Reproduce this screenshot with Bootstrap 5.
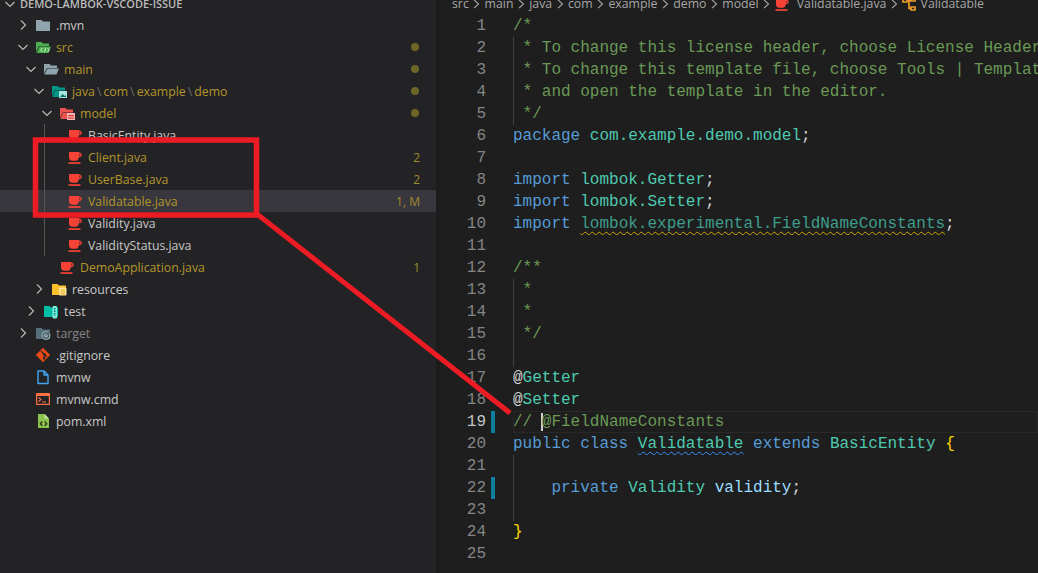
<!DOCTYPE html>
<html lang="en">
<head>
<meta charset="utf-8">
<title>Validatable.java</title>
<link href="https://cdn.jsdelivr.net/npm/bootstrap@5.3.0/dist/css/bootstrap.min.css" rel="stylesheet">
<style>
html,body{height:100%;overflow:hidden;background:#1e1e1e}
.workbench{height:573px;position:relative;overflow:hidden}
.side{width:436px;background:#232325;font:12.3px/22px "Open Sans",sans-serif;color:#c8c8c8;margin-top:-8px;flex:none;position:relative}
.gutterstrip{width:4px;background:#1c1c1c;flex:none}
.tree-head{height:22px;padding-top:2px;font-weight:600;font-size:11px;color:#bbb;padding-left:2px;position:relative}
.tree-head .chev{width:18px}
.trow{height:22px;display:flex;align-items:center;padding-right:16px;position:relative}
.trow>span:not(.chev):not(.dot){padding-top:2px}
.trow.sel{background:#37373d}
.d0{padding-left:15px}.d1{padding-left:23px}.d2{padding-left:31px}.d3{padding-left:39px}.d4{padding-left:47px}
.chev{width:20px;height:16px;flex:none;display:flex;align-items:center}
.chev svg{width:16px;height:16px}
.ficon{width:16px;height:16px;margin-right:5px;flex:none}
.mod{color:#b3952c}
.dim{color:#858585}
.sep{color:#6b6b6b;margin:0 2px}
.stat{margin-left:auto;color:#a08a2c;font-size:12px}
.dot{margin-left:auto;margin-right:1px;width:8px;height:8px;border-radius:50%;background:#6d6526}
.tguide{position:absolute;left:44px;top:132px;width:1px;height:132px;background:#555}
.editor{min-width:0;background:#1e1e1e;margin-top:-7px;position:relative}
.crumbs{height:22px;font:12.3px/22px "Open Sans",sans-serif;color:#a6a6a6;padding-left:12px;gap:4.400px;white-space:nowrap}
.crumbs svg{flex:none}
.crumbs .file{margin-right:2px}
.cline{height:22px;display:flex;font:16px/22px "Liberation Mono",monospace;white-space:pre;color:#d4d4d4;position:relative}
.num{width:46px;text-align:right;color:#858585;flex:none;font-family:"Liberation Mono",monospace}
.bar{width:4px;margin-left:5px;margin-right:18px;flex:none}
.bar.on{background:#0c7d9d}
.txt{position:relative;flex:1;min-width:0;overflow:hidden}
.guide::before{content:"";position:absolute;left:0;top:0;bottom:0;width:1px;background:#404040}
.active .num{color:#c6c6c6}
.active .txt{box-shadow:inset 0 0 0 1px #282828}
.caret-mark{border-left:2px solid #d0d0d0;margin-left:-1px;margin-right:-1px}
.c{color:#6a9955}.k{color:#569cd6}.t{color:#4ec9b0}.v{color:#9cdcfe}.b{color:#ffd700}
.faded{color:#3f9d8b}
.warn{text-decoration:underline wavy #cca700 1px;text-underline-offset:3px}
.info{text-decoration:underline wavy #3794ff 1px;text-underline-offset:3px}
.note{position:absolute;left:0;top:0;pointer-events:none}
</style>
</head>
<body>
<svg width="0" height="0" class="d-block">
<defs>
<symbol id="cd" viewBox="0 0 16 16"><path d="M3.500 6l4.500 4.500L12.500 6" fill="none" stroke="#b8b8b8" stroke-width="1.200"/></symbol>
<symbol id="cr" viewBox="0 0 16 16"><path d="M6 3.500L10.500 8 6 12.500" fill="none" stroke="#b8b8b8" stroke-width="1.200"/></symbol>
<symbol id="crs" viewBox="0 0 7 10"><path d="M1 .8L5.500 5 1 9.200" fill="none" stroke="#a6a6a6" stroke-width="1.100"/></symbol>
<symbol id="java" viewBox="0 0 16 16"><path d="M2 3h10.200v.8h.5a2 2 0 0 1 0 4.200h-.7C11.700 10.300 10.500 11.700 8.800 11.700H5.200C3.300 11.700 2 10.300 2 8.300z" fill="#f44336"/><rect x="1.500" y="13.200" width="12" height="1.700" fill="#f44336"/><rect x="12.200" y="5.300" width="1.100" height="1.300" fill="#232325"/></symbol>
<symbol id="fold" viewBox="0 0 16 16"><path d="M1 3h5.500L8 4.500h7V14H1z" fill="#90a4ae"/></symbol>
<symbol id="foldo" viewBox="0 0 16 16"><path d="M1 3h5.500L8 4.500h6V7H4L1 13z" fill="#90a4ae"/><path d="M4.500 7.500H16L13.500 13.500H1.500z" fill="#90a4ae"/></symbol>
<symbol id="fsrc" viewBox="0 0 16 16"><path d="M1 3h5.500L8 4.500h6V7H4L1 13z" fill="#4caf50"/><path d="M4.500 7.500H16L13.500 14H1.500z" fill="#4caf50"/><path d="M7.500 9l-2 2 2 2M12.500 9l2 2-2 2M10.800 8.500l-1.400 5" fill="none" stroke="#c8f0c8" stroke-width="1"/></symbol>
<symbol id="fjava" viewBox="0 0 16 16"><path d="M1 3h5.500L8 4.500h6V7H4L1 13z" fill="#009688"/><path d="M4 7.500h10V14H1.500z" fill="#009688"/><rect x="8" y="8" width="8" height="7" fill="#a7e3dc"/><path d="M9 14l2.500-3 2 2 1.500-1v2z" fill="#00796b"/></symbol>
<symbol id="fmodel" viewBox="0 0 16 16"><path d="M1 3h5.500L8 4.500h6V7H4L1 13z" fill="#ef5350"/><path d="M4 7.500h10V14H1.500z" fill="#ef5350"/><rect x="8" y="8" width="8" height="7" fill="#f5b5b5"/><rect x="9" y="10" width="6" height="1.200" fill="#e53935"/><rect x="9" y="12.500" width="6" height="1.200" fill="#e53935"/></symbol>
<symbol id="fres" viewBox="0 0 16 16"><path d="M1 3h5.500L8 4.500h7V14H1z" fill="#fbc02d"/><rect x="8" y="6.500" width="7.500" height="8" rx="1" fill="#ffe59a"/><path d="M9.500 9h4.500M9.500 11h4.500M9.500 13h4.500" stroke="#e0a800" stroke-width=".8"/></symbol>
<symbol id="ftest" viewBox="0 0 16 16"><path d="M1 3h5.500L8 4.500h7V14H1z" fill="#00bfa5"/><rect x="9.500" y="3" width="4.500" height="12.500" rx="1" fill="#80e6d8"/><path d="M11.700 5v8" stroke="#00897b" stroke-width="1.500" stroke-dasharray="1.500 1"/></symbol>
<symbol id="ftarget" viewBox="0 0 16 16"><path d="M1 3h5.500L8 4.500h7V14H1z" fill="#546e7a"/><circle cx="11" cy="10.500" r="4.500" fill="#8fa3ad"/><circle cx="11" cy="10.500" r="2.800" fill="none" stroke="#37474f" stroke-width="1"/><path d="M11 10.500l4-4" stroke="#37474f" stroke-width="1"/></symbol>
<symbol id="git" viewBox="0 0 16 16"><path d="M8 .8L15.200 8 8 15.200.8 8z" fill="#e64a19"/><path d="M6 4l3.300 3.300M9.300 7.300V12M9.300 7.300l2.500 2.500" stroke="#232325" stroke-width="1.200" fill="none"/><circle cx="9.300" cy="7.300" r="1.200" fill="#232325"/><circle cx="9.300" cy="11.500" r="1.200" fill="#232325"/></symbol>
<symbol id="doc" viewBox="0 0 16 16"><path d="M3 2h6l4 4v8.500H3z M9 2v4h4" fill="none" stroke="#42a5f5" stroke-width="1.400" stroke-linejoin="round"/></symbol>
<symbol id="cmd" viewBox="0 0 16 16"><rect x="1" y="2" width="14" height="12" rx="1" fill="#ff7043"/><rect x="2.200" y="5" width="11.600" height="7.800" fill="#232325"/><path d="M3.500 6.500L6 8.500 3.500 10.500M7 11h4" stroke="#ff7043" stroke-width="1.100" fill="none"/></symbol>
<symbol id="xml" viewBox="0 0 16 16"><path d="M3 1h6.500L14 5.500V15H3z" fill="#8bc34a"/><path d="M9.500 1v4.500H14" fill="#c5e1a5"/><path d="M7.300 8.500L5.300 10.700l2 2.200M9.700 8.500l2 2.200-2 2.200" stroke="#232325" stroke-width="1.200" fill="none"/></symbol>
<symbol id="cls" viewBox="0 0 14 14"><g fill="none" stroke="#ee9d28" stroke-width="1.700"><path d="M1 2h4v3H1zM9 1h4v3H9zM9 10h4v3H9zM5 3.500h4M7 3.500v8h2"/></g></symbol>
</defs>
</svg>
<div class="workbench d-flex">
  <div class="side">
    <div class="tree-head d-flex align-items-center"><span class="chev"><svg><use href="#cd"/></svg></span>DEMO-LAMBOK-VSCODE-ISSUE</div>
    <div class="trow d0"><span class="chev"><svg><use href="#cr"/></svg></span><svg class="ficon"><use href="#fold"/></svg><span>.mvn</span></div>
    <div class="trow d0 mod"><span class="chev"><svg><use href="#cd"/></svg></span><svg class="ficon"><use href="#fsrc"/></svg><span>src</span><span class="dot"></span></div>
    <div class="trow d1 mod"><span class="chev"><svg><use href="#cd"/></svg></span><svg class="ficon"><use href="#foldo"/></svg><span>main</span><span class="dot"></span></div>
    <div class="trow d2 mod"><span class="chev"><svg><use href="#cd"/></svg></span><svg class="ficon"><use href="#fjava"/></svg><span>java<span class="sep">\</span>com<span class="sep">\</span>example<span class="sep">\</span>demo</span><span class="dot"></span></div>
    <div class="trow d3 mod"><span class="chev"><svg><use href="#cd"/></svg></span><svg class="ficon"><use href="#fmodel"/></svg><span>model</span><span class="dot"></span></div>
    <div class="trow d4"><span class="chev"></span><svg class="ficon"><use href="#java"/></svg><span>BasicEntity.java</span></div>
    <div class="trow d4 mod"><span class="chev"></span><svg class="ficon"><use href="#java"/></svg><span>Client.java</span><span class="stat">2</span></div>
    <div class="trow d4 mod"><span class="chev"></span><svg class="ficon"><use href="#java"/></svg><span>UserBase.java</span><span class="stat">2</span></div>
    <div class="trow d4 mod sel"><span class="chev"></span><svg class="ficon"><use href="#java"/></svg><span>Validatable.java</span><span class="stat">1, M</span></div>
    <div class="trow d4"><span class="chev"></span><svg class="ficon"><use href="#java"/></svg><span>Validity.java</span></div>
    <div class="trow d4"><span class="chev"></span><svg class="ficon"><use href="#java"/></svg><span>ValidityStatus.java</span></div>
    <div class="trow d3 mod"><span class="chev"></span><svg class="ficon"><use href="#java"/></svg><span>DemoApplication.java</span><span class="stat">1</span></div>
    <div class="trow d2"><span class="chev"><svg><use href="#cr"/></svg></span><svg class="ficon"><use href="#fres"/></svg><span>resources</span></div>
    <div class="trow d1"><span class="chev"><svg><use href="#cr"/></svg></span><svg class="ficon"><use href="#ftest"/></svg><span>test</span></div>
    <div class="trow d0 dim"><span class="chev"><svg><use href="#cr"/></svg></span><svg class="ficon"><use href="#ftarget"/></svg><span>target</span></div>
    <div class="trow d0"><span class="chev"></span><svg class="ficon"><use href="#git"/></svg><span>.gitignore</span></div>
    <div class="trow d0"><span class="chev"></span><svg class="ficon"><use href="#doc"/></svg><span>mvnw</span></div>
    <div class="trow d0"><span class="chev"></span><svg class="ficon"><use href="#cmd"/></svg><span>mvnw.cmd</span></div>
    <div class="trow d0"><span class="chev"></span><svg class="ficon"><use href="#xml"/></svg><span>pom.xml</span></div>
    <div class="tguide"></div>
  </div>
  <div class="gutterstrip"></div>
  <div class="editor flex-grow-1">
    <div class="crumbs d-flex align-items-center">
      <span>src</span><svg width="7" height="10"><use href="#crs"/></svg><span>main</span><svg width="7" height="10"><use href="#crs"/></svg><span>java</span><svg width="7" height="10"><use href="#crs"/></svg><span>com</span><svg width="7" height="10"><use href="#crs"/></svg><span>example</span><svg width="7" height="10"><use href="#crs"/></svg><span>demo</span><svg width="7" height="10"><use href="#crs"/></svg><span>model</span><svg width="7" height="10"><use href="#crs"/></svg>
      <svg class="file" width="16" height="16"><use href="#java"/></svg><span>Validatable.java</span><svg width="7" height="10"><use href="#crs"/></svg>
      <svg width="14" height="14"><use href="#cls"/></svg><span>Validatable</span>
    </div>
    <div class="cline"><span class="num">1</span><span class="bar"></span><span class="txt c">/*</span></div>
    <div class="cline"><span class="num">2</span><span class="bar"></span><span class="txt guide c"> * To change this license header, choose License Header</span></div>
    <div class="cline"><span class="num">3</span><span class="bar"></span><span class="txt guide c"> * To change this template file, choose Tools | Templates</span></div>
    <div class="cline"><span class="num">4</span><span class="bar"></span><span class="txt guide c"> * and open the template in the editor.</span></div>
    <div class="cline"><span class="num">5</span><span class="bar"></span><span class="txt guide c"> */</span></div>
    <div class="cline"><span class="num">6</span><span class="bar"></span><span class="txt"><span class="k">package</span> <span class="t">com.example.demo.model</span>;</span></div>
    <div class="cline"><span class="num">7</span><span class="bar"></span><span class="txt"></span></div>
    <div class="cline"><span class="num">8</span><span class="bar"></span><span class="txt"><span class="k">import</span> <span class="t">lombok.Getter</span>;</span></div>
    <div class="cline"><span class="num">9</span><span class="bar"></span><span class="txt"><span class="k">import</span> <span class="t">lombok.Setter</span>;</span></div>
    <div class="cline"><span class="num">10</span><span class="bar"></span><span class="txt"><span class="k">import</span> <span class="faded warn">lombok.experimental.FieldNameConstants</span>;</span></div>
    <div class="cline"><span class="num">11</span><span class="bar"></span><span class="txt"></span></div>
    <div class="cline"><span class="num">12</span><span class="bar"></span><span class="txt c">/**</span></div>
    <div class="cline"><span class="num">13</span><span class="bar"></span><span class="txt guide c"> *</span></div>
    <div class="cline"><span class="num">14</span><span class="bar"></span><span class="txt guide c"> *</span></div>
    <div class="cline"><span class="num">15</span><span class="bar"></span><span class="txt guide c"> */</span></div>
    <div class="cline"><span class="num">16</span><span class="bar"></span><span class="txt guide"></span></div>
    <div class="cline"><span class="num">17</span><span class="bar"></span><span class="txt">@<span class="t">Getter</span></span></div>
    <div class="cline"><span class="num">18</span><span class="bar"></span><span class="txt">@<span class="t">Setter</span></span></div>
    <div class="cline active"><span class="num">19</span><span class="bar on"></span><span class="txt c">// <span class="caret-mark"></span>@FieldNameConstants</span></div>
    <div class="cline"><span class="num">20</span><span class="bar"></span><span class="txt"><span class="k">public class</span> <span class="t info">Validatable</span> <span class="k">extends</span> <span class="t">BasicEntity</span> <span class="b">{</span></span></div>
    <div class="cline"><span class="num">21</span><span class="bar"></span><span class="txt guide"></span></div>
    <div class="cline"><span class="num">22</span><span class="bar on"></span><span class="txt guide">    <span class="k">private</span> <span class="t">Validity</span> <span class="v">validity</span>;</span></div>
    <div class="cline"><span class="num">23</span><span class="bar"></span><span class="txt guide"></span></div>
    <div class="cline"><span class="num">24</span><span class="bar"></span><span class="txt b">}</span></div>
    <div class="cline"><span class="num">25</span><span class="bar"></span><span class="txt"></span></div>
  </div>
  <svg class="note" width="1038" height="573" viewBox="0 0 1038 573">
    <rect x="35.500" y="140" width="221" height="75" fill="none" stroke="#ed1c24" stroke-width="5.500"/>
    <path d="M257 214L510 413" fill="none" stroke="#ed1c24" stroke-width="5"/>
  </svg>
</div>
<script src="https://cdn.jsdelivr.net/npm/bootstrap@5.3.0/dist/js/bootstrap.bundle.min.js"></script>
</body>
</html>
